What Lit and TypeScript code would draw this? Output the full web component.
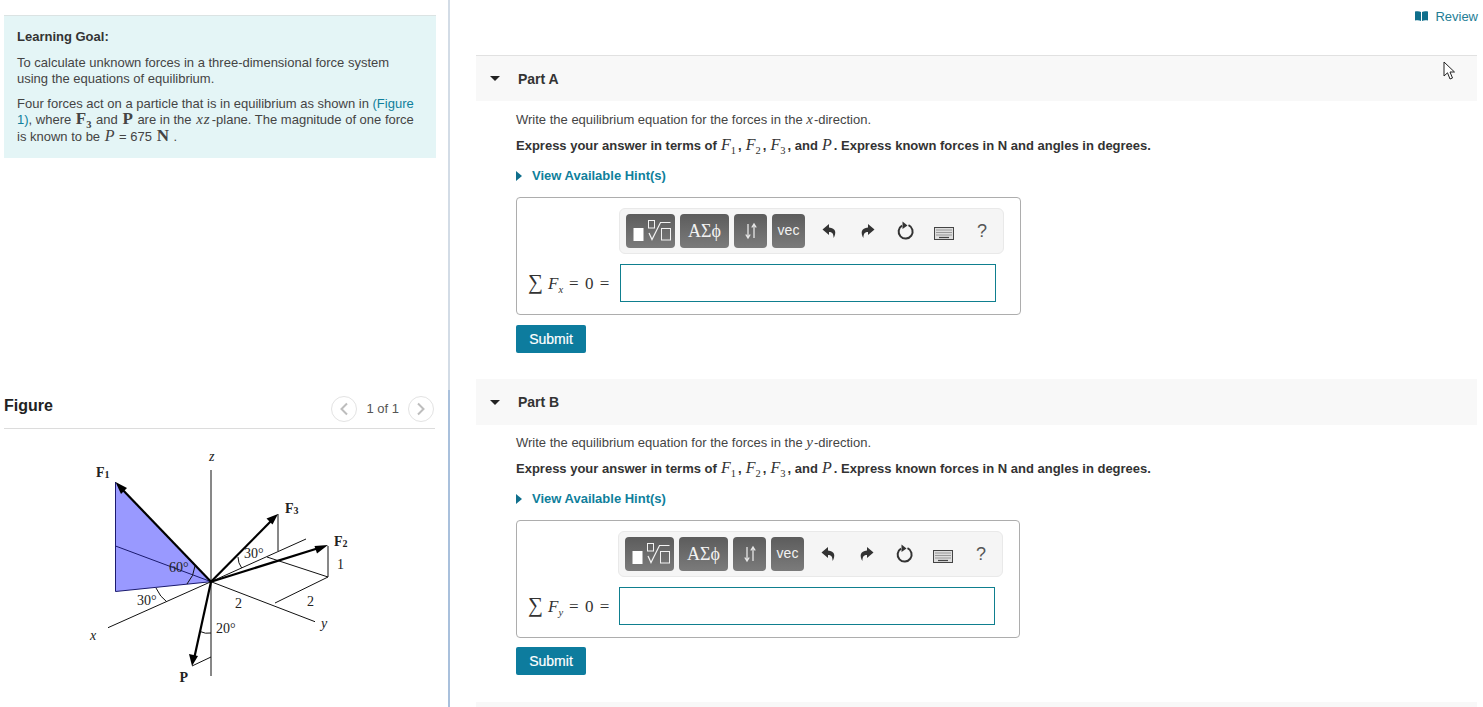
import { LitElement, html, css, svg } from "lit";
import { customElement } from "lit/decorators.js";
import { classMap } from "lit/directives/class-map.js";

const PARTS = [
  { name: "Part A", axis: "x", second: false },
  { name: "Part B", axis: "y", second: true },
];

const undoIcon = svg`<path d="M7 1 .5 6.5 7 12V9c3 0 4.6 1.5 4.6 6C14.6 10 14 5 7 4.5z" fill="currentColor"/>`;

@customElement("app-root")
export class AppRoot extends LitElement {
  static styles = css`
    :host {
      display: block;
      height: 707px;
      overflow: hidden;
      position: relative;
      background: #fff;
      color: #444;
      font-family: "Liberation Sans", Arial, sans-serif;
      font-size: 13px;
      line-height: 18px;
    }
    .page {
      display: grid;
      grid-template-columns: 450px 1fr;
      height: 707px;
    }

    .left {
      display: flex;
      flex-direction: column;
    }
    .intro {
      height: 390px;
      box-sizing: border-box;
      padding: 15px 12px 0 4px;
      border-right: 2px solid #d3dce6;
    }
    .goal {
      border-top: 1px solid #dbe3e3;
      background: #e4f5f6;
      padding: 13px 19px 13px 13px;
      line-height: 16.5px;
    }
    .goal-title {
      font-weight: bold;
      color: #333;
    }
    .goal p {
      margin: 9px 0 0;
    }
    .goal p + p {
      margin-top: 8px;
    }
    .goal .n,
    .goal .m {
      margin: 0 1px;
    }
    .link {
      color: #0f7f9c;
    }
    .figure {
      flex: 1;
      padding: 0 12px 0 4px;
      border-right: 2px solid #a9c0dc;
      min-height: 0;
    }
    .fig-head {
      display: flex;
      align-items: center;
      height: 38px;
      border-bottom: 1px solid #dcdcdc;
      margin-right: 1px;
    }
    .fig-title {
      font-size: 16px;
      font-weight: bold;
      color: #222;
      margin-bottom: 6px;
      flex: 1;
    }
    .pager {
      display: flex;
      align-items: center;
      gap: 9px;
      margin-right: 1px;
      color: #555;
    }
    .round {
      width: 26px;
      height: 26px;
      box-sizing: border-box;
      border: 1px solid #e3e3e3;
      border-radius: 50%;
      display: flex;
      align-items: center;
      justify-content: center;
      color: #bdbdbd;
    }
    .diagram {
      display: block;
      margin-left: -4px;
    }
    .diagram text {
      font-family: "Liberation Serif", "Times New Roman", serif;
      font-size: 14px;
      fill: #222;
    }
    .diagram .bold {
      font-weight: bold;
    }
    .diagram .ital {
      font-style: italic;
    }
    .diagram .sub {
      font-size: 10px;
    }

    .right {
      padding-right: 6px;
      padding-left: 26px;
    }
    .review-row {
      height: 55px;
      box-sizing: border-box;
      display: flex;
      justify-content: flex-end;
      align-items: flex-start;
      padding-top: 8px;
      margin-right: -1px;
      gap: 7px;
      color: #247d95;
    }
    .review-row svg {
      margin-top: 3px;
    }
    .part-head {
      display: flex;
      align-items: center;
      box-sizing: border-box;
      height: 46px;
      background: #f8f8f8;
      font-size: 14px;
      font-weight: bold;
      color: #333;
    }
    .part-head.first {
      border-top: 1px solid #e1e1e1;
    }
    .caret {
      width: 0;
      height: 0;
      margin: 0 18px 0 14px;
      border-left: 5px solid transparent;
      border-right: 5px solid transparent;
      border-top: 5px solid #222;
    }
    .part-body {
      padding: 10px 0 26px 40px;
    }
    .part-body.second {
      padding-top: 9px;
    }
    .part-body p {
      margin: 0;
    }
    .lead {
      margin-top: 8px !important;
      font-weight: bold;
      white-space: nowrap;
      color: #333;
    }
    .lead .m {
      margin: 0 2px 0 0.5px;
    }
    .hint {
      display: flex;
      align-items: center;
      gap: 10px;
      margin-top: 12px;
      font-weight: bold;
      color: #0f7f9c;
    }
    .hint-caret {
      width: 0;
      height: 0;
      border-top: 5px solid transparent;
      border-bottom: 5px solid transparent;
      border-left: 6px solid #0f6f8c;
    }
    .answer {
      display: grid;
      grid-template-columns: 92px 1fr;
      align-items: center;
      row-gap: 10px;
      box-sizing: border-box;
      width: 505px;
      height: 118px;
      margin-top: 12px;
      padding: 10px 0 12px 11px;
      border: 1px solid #adadad;
      border-radius: 4px;
    }
    .answer.second {
      grid-template-columns: 91px 1fr;
      width: 504px;
    }
    .toolbar {
      grid-column: 2;
      display: flex;
      align-items: center;
      box-sizing: border-box;
      width: 385px;
      height: 46px;
      margin-left: -1px;
      padding-left: 6px;
      background: #f5f5f5;
      border: 1px solid #e9e9e9;
      border-radius: 6px;
    }
    .tool {
      height: 34px;
      margin-right: 5px;
      box-sizing: border-box;
      display: flex;
      align-items: center;
      justify-content: center;
      border-radius: 4px;
      background: linear-gradient(#5c5c5c, #7b7b7b);
      color: #f2f2f2;
    }
    .tool.templates {
      width: 49px;
    }
    .tool.symbols {
      width: 49px;
      font-family: "Liberation Serif", serif;
      font-size: 18px;
    }
    .tool.arrows {
      width: 33px;
    }
    .tool.vec {
      width: 33px;
      padding-bottom: 3px;
      font-size: 14px;
    }
    .actions {
      display: flex;
    }
    .action {
      width: 38.25px;
      height: 24px;
      display: flex;
      align-items: center;
      justify-content: center;
      color: #333;
    }
    .action.question {
      font-size: 18px;
      color: #555;
    }
    .action.keys svg {
      margin-top: 5px;
    }
    .label {
      font-family: "Liberation Serif", serif;
      font-size: 17px;
      color: #333;
      white-space: nowrap;
    }
    .sum {
      font-size: 21px;
      margin-right: 5px;
    }
    .eq {
      margin-left: 6px;
      word-spacing: 2px;
    }
    .input {
      box-sizing: border-box;
      width: 376px;
      height: 38px;
      border: 1px solid #0f7f8f;
      background: #fff;
    }
    .submit {
      display: block;
      width: 70px;
      height: 28px;
      margin-top: 10px;
      padding: 0;
      border: 0;
      border-radius: 2px;
      background: #0d7c9e;
      color: #fff;
      font: 14px/28px "Liberation Sans", Arial, sans-serif;
      -webkit-text-stroke: 0.2px #fff;
    }
    .submit.second {
      margin-top: 9px;
    }
    .next {
      height: 10px;
      margin-top: 1px;
      background: #f8f8f8;
    }

    .m {
      font-family: "Liberation Serif", serif;
      font-size: 16px;
      font-weight: normal;
      font-style: italic;
      line-height: 0;
    }
    .m.low {
      font-size: 15px;
      letter-spacing: 1px;
    }
    .n {
      font-family: "Liberation Serif", serif;
      font-size: 17px;
      font-weight: bold;
      line-height: 0;
    }
    .m sub,
    .n sub,
    .label sub {
      font-size: 10.5px;
      font-style: normal;
      line-height: 0;
    }
    .label sub.i {
      font-style: italic;
    }

    .cursor {
      position: absolute;
      left: 1443px;
      top: 61px;
    }
  `;

  private renderTemplatesIcon() {
    return html`<svg width="46" height="30" viewBox="0 0 46 30" fill="none" stroke="#f2f2f2">
      <rect x="5.5" y="12" width="10" height="13" fill="#fff" stroke="none" />
      <rect x="20.5" y="4.5" width="6" height="7.5" />
      <path d="M21 17l3 6.5L32.5 6.5h10" stroke-width="1.2" />
      <rect x="33.5" y="12.5" width="9" height="11.5" />
    </svg>`;
  }

  private renderArrowsIcon() {
    return html`<svg width="14" height="20" viewBox="0 0 14 20" fill="none" stroke="#e6e6e6" stroke-width="1.3">
      <path d="M4 3v14M1.8 13.5 4 17l2.2-3.5" />
      <path d="M10 17V3M7.8 6.5 10 3l2.2 3.5" />
    </svg>`;
  }

  private renderActions() {
    return html`<div class="actions">
      <div class="action">
        <svg width="15" height="16" viewBox="0 0 15 16">${undoIcon}</svg>
      </div>
      <div class="action">
        <svg width="15" height="16" viewBox="0 0 15 16" style="transform: scaleX(-1)">${undoIcon}</svg>
      </div>
      <div class="action">
        <svg width="18" height="20" viewBox="0 0 18 20" fill="none">
          <path d="M11.5 4.2A7 7 0 1 1 5 4.6" stroke="#333" stroke-width="2" />
          <path d="M5.5 0.5 10.5 4.5 5.5 8z" fill="#333" />
        </svg>
      </div>
      <div class="action keys">
        <svg width="20" height="13" viewBox="0 0 20 13">
          <rect x="0.5" y="0.5" width="19" height="12" fill="#ddd" stroke="#444" />
          <path d="M2.5 3h15M2.5 5.5h15M2.5 8h15" stroke="#555" stroke-width="1.2" stroke-dasharray="1 1" />
          <path d="M5 10.5h10" stroke="#444" stroke-width="1.2" />
        </svg>
      </div>
      <div class="action question">?</div>
    </div>`;
  }

  private renderPart(part: (typeof PARTS)[number]) {
    const second = { second: part.second };
    return html`
      <div class=${classMap({ "part-head": true, first: !part.second })}>
        <span class="caret"></span>${part.name}
      </div>
      <div class=${classMap({ "part-body": true, ...second })}>
        <p>Write the equilibrium equation for the forces in the <span class="m low">${part.axis}</span>-direction.</p>
        <p class="lead">
          Express your answer in terms of <span class="m">F<sub>1</sub></span>, <span class="m">F<sub>2</sub></span>,
          <span class="m">F<sub>3</sub></span>, and <span class="m">P</span>. Express known forces in N and angles in
          degrees.
        </p>
        <div class="hint"><span class="hint-caret"></span>View Available Hint(s)</div>
        <div class=${classMap({ answer: true, ...second })}>
          <div class="toolbar">
            <div class="tool templates">${this.renderTemplatesIcon()}</div>
            <div class="tool symbols">ΑΣϕ</div>
            <div class="tool arrows">${this.renderArrowsIcon()}</div>
            <div class="tool vec">vec</div>
            ${this.renderActions()}
          </div>
          <div class="label">
            <span class="sum">∑</span><i>F</i><sub class="i">${part.axis}</sub><span class="eq">= 0 =</span>
          </div>
          <div class="input"></div>
        </div>
        <button class=${classMap({ submit: true, ...second })}>Submit</button>
      </div>
    `;
  }

  private renderDiagram() {
    // viewBox keeps the page coordinates of the drawing
    return html`<svg class="diagram" width="449" height="278" viewBox="0 429 449 278" fill="none">
      <polygon points="115.5,482 211,581.7 115.5,591.5" fill="#9999ff" />
      <path d="M115.5 482V591.5L211 581.7M115.5 546 211 581.7" stroke="#1a1a6e" stroke-width="1" />
      <g stroke="#111" stroke-width="1">
        <path d="M211 470V676" />
        <path d="M108 627.7 211 581.7 315 621.7" />
        <path d="M211 581.7 306 539" />
        <path d="M275 603 328 577V546M267 557 328 577" />
        <path d="M278 514V551" />
        <path d="M192 666 211 657" />
        <path d="M200.7 631.7Q205 634 211 633" />
        <path d="M156 588Q160 597 167 602" />
        <path d="M187 584Q194 576 195 566" />
        <path d="M238 557Q238 563 241.7 568" />
      </g>
      <g stroke="#000" stroke-width="2.2" fill="#000">
        <path d="M211 581.7 120 487" />
        <path d="M211 581.7 274 518" />
        <path d="M211 581.7 322 547" />
        <path d="M211 581.7 194 659" />
      </g>
      <g fill="#000">
        <polygon points="115.5,482 127,488 121,494" />
        <polygon points="278,514 272.5,524.5 266.5,518.5" />
        <polygon points="328,545 317,553.5 314.5,546" />
        <polygon points="192,666 189,654 198,656" />
      </g>
      <text x="96" y="477" class="bold">F<tspan class="sub" dy="1">1</tspan></text>
      <text x="285" y="513" class="bold">F<tspan class="sub" dy="1">3</tspan></text>
      <text x="334" y="546" class="bold">F<tspan class="sub" dy="1">2</tspan></text>
      <text x="179.5" y="682" class="bold">P</text>
      <text x="209" y="461" class="ital">z</text>
      <text x="90" y="640" class="ital">x</text>
      <text x="321" y="628" class="ital">y</text>
      <text x="169" y="572">60°</text>
      <text x="137" y="605">30°</text>
      <text x="244" y="558">30°</text>
      <text x="216" y="633">20°</text>
      <text x="235" y="608">2</text>
      <text x="307" y="606">2</text>
      <text x="337" y="569">1</text>
    </svg>`;
  }

  render() {
    return html`
      <div class="page">
        <div class="left">
          <div class="intro">
            <div class="goal">
              <div class="goal-title">Learning Goal:</div>
              <p>To calculate unknown forces in a three-dimensional force system using the equations of equilibrium.</p>
              <p>
                Four forces act on a particle that is in equilibrium as shown in
                <span class="link">(Figure 1)</span>, where <span class="n">F<sub>3</sub></span> and
                <span class="n">P</span> are in the <span class="m low">xz</span>-plane. The magnitude of one force is
                known to be <span class="m">P</span> = 675 <span class="n">N</span> .
              </p>
            </div>
          </div>
          <div class="figure">
            <div class="fig-head">
              <div class="fig-title">Figure</div>
              <div class="pager">
                <div class="round">
                  <svg width="10" height="14" viewBox="0 0 10 14" fill="none" stroke="currentColor" stroke-width="2">
                    <path d="M8 1.5 2.5 7 8 12.5" />
                  </svg>
                </div>
                1 of 1
                <div class="round">
                  <svg width="10" height="14" viewBox="0 0 10 14" fill="none" stroke="currentColor" stroke-width="2">
                    <path d="M2 1.5 7.5 7 2 12.5" />
                  </svg>
                </div>
              </div>
            </div>
            ${this.renderDiagram()}
          </div>
        </div>
        <div class="right">
          <div class="review-row">
            <svg width="13" height="10" viewBox="0 0 13 10" fill="#0f6f8c">
              <path d="M0 0.5C2 0 4.5 0 6 1V10C4.5 9 2 9 0 9.5zM13 0.5C11 0 8.5 0 7 1V10C8.5 9 11 9 13 9.5z" />
            </svg>
            Review
          </div>
          ${PARTS.map((part) => this.renderPart(part))}
          <div class="next"></div>
        </div>
      </div>
      <svg class="cursor" width="13" height="20" viewBox="0 0 13 20">
        <path d="M1 1V15L4.5 11.8 7 18 9.5 17 7 11H11.5z" fill="#fff" stroke="#222" stroke-width="1" />
      </svg>
    `;
  }
}
